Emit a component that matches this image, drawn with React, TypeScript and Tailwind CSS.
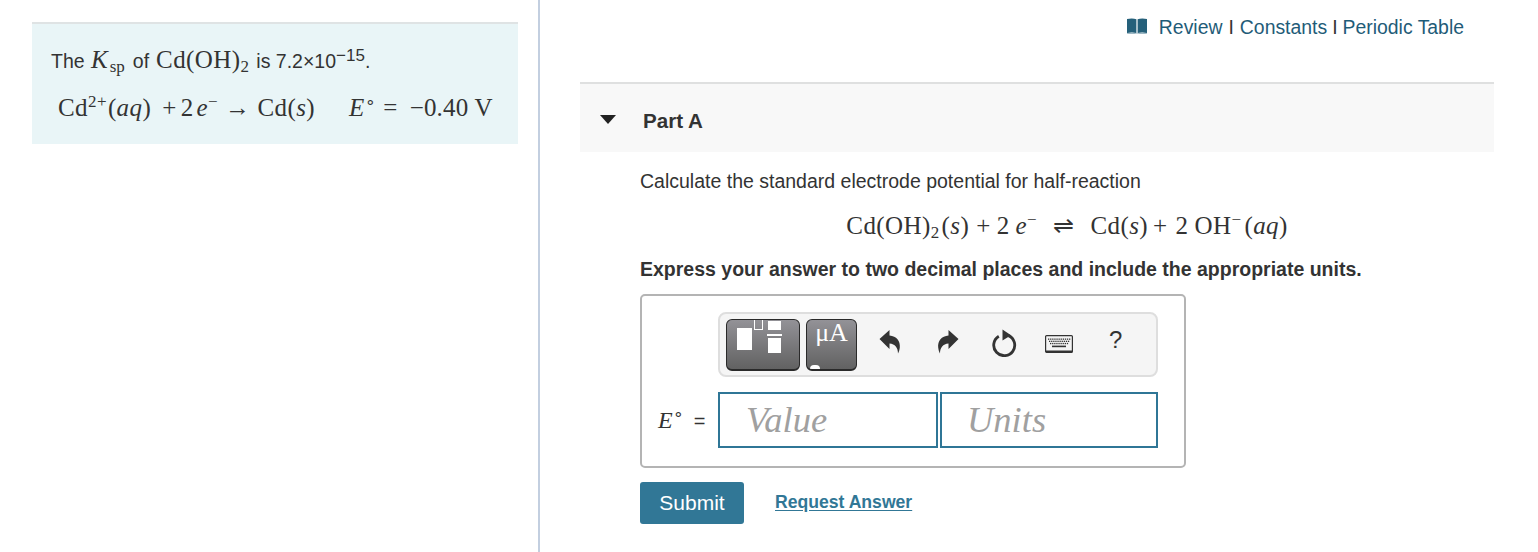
import React from "react";

const sans = "font-['Liberation_Sans',Arial,sans-serif]";
const serif = "font-['Liberation_Serif','Times_New_Roman',serif]";

function Sub({ children }: { children: React.ReactNode }) {
  return <sub className="text-[17px] leading-none align-[-4px] static">{children}</sub>;
}
function Sup({ children }: { children: React.ReactNode }) {
  return <sup className="text-[17px] leading-none align-[9px] static">{children}</sup>;
}

function BookIcon() {
  return (
    <svg width="20" height="16" viewBox="0 0 20 16" className="block">
      <path d="M0 1C3 0.2 7 0.2 9.4 1.2V15C7 14.2 3 14.2 0 15Z" fill="#25607a" />
      <path d="M10.6 1.2C13 0.2 17 0.2 20 1V15C17 14.2 13 14.2 10.6 15Z" fill="#25607a" />
      <path d="M0 15.2C3 14.4 7 14.4 10 15.6C13 14.4 17 14.4 20 15.2V16H0Z" fill="#9db8c4" />
    </svg>
  );
}

function TemplateBtn() {
  return (
    <div className="w-[74px] h-[52px] rounded-[6px] border-b-2 border-x border-t border-[#2a2a2a] bg-gradient-to-b from-[#939297] to-[#626262] flex gap-[2px] pl-[10px]">
      <div className="w-[15px] h-[22px] bg-white mt-[8px]" />
      <div className="w-[9px] h-[10px] border-x border-b border-white mt-0" />
      <div className="flex flex-col items-center w-[15px] ml-[2px] mt-[1px]">
        <div className="w-[13px] h-[9px] bg-white" />
        <div className="w-[15px] h-[2px] bg-white mt-[4px]" />
        <div className="w-[13px] h-[15px] bg-white mt-[2px]" />
      </div>
    </div>
  );
}

function UnitBtn() {
  return (
    <div className={`relative w-[51px] h-[52px] rounded-[6px] border-b-2 border-x border-t border-[#2a2a2a] bg-gradient-to-b from-[#939297] to-[#626262] text-center text-white text-[26px] leading-[26px] overflow-hidden ${serif}`}>
      μA
      <div className="absolute left-[3px] bottom-0 w-[10px] h-[4px] rounded-t-full bg-white" />
    </div>
  );
}

function Undo({ flip }: { flip?: boolean }) {
  return (
    <svg width="22" height="26" viewBox="0 0 22 26" className={flip ? "-scale-x-100" : ""}>
      <path d="M0.5 10 L10.5 1 V6.5 C17.5 7 21.5 12 20.8 18.5 C20.5 21 19.8 23 19 24.5 C19 19 16 15 10.5 14.6 V20 Z" fill="#333" />
    </svg>
  );
}

function Reset() {
  return (
    <svg width="26" height="28" viewBox="0 0 26 28">
      <path d="M7.8 7.2 A10.5 10.5 0 1 0 17.5 6.6" fill="none" stroke="#333" strokeWidth="2.8" />
      <path d="M11.5 0.5 L20 6.2 L11.5 11.5 Z" fill="#333" />
    </svg>
  );
}

function Keyboard() {
  const dots: React.ReactNode[] = [];
  [0, 1, 2].forEach((r) => {
    for (let c = 0; c < 11 - r; c++) {
      dots.push(<rect key={`${r}-${c}`} x={3 + c * 2.1 + r} y={3.5 + r * 2.2} width="1.3" height="1.3" fill="#333" />);
    }
  });
  return (
    <svg width="28" height="18" viewBox="0 0 28 18">
      <rect x="0.6" y="0.6" width="26.8" height="16.8" rx="1" fill="#f4f4f4" stroke="#333" strokeWidth="1.2" />
      {dots}
      <rect x="7" y="10.6" width="14" height="1.6" fill="#333" />
      <rect x="1" y="15.5" width="26" height="2" fill="#333" />
    </svg>
  );
}

export default function App() {
  return (
    <div className={`flex w-[1538px] h-[552px] bg-white text-[#333] overflow-hidden ${sans}`}>
      <div className="w-[540px] h-full shrink-0 border-r-2 border-[#c3cfe0] pl-[32px] pr-[20px] pt-[22px]">
        <div className="h-[122px] border-t-2 border-[#dfe3e4] bg-[#e9f5f7] pl-[19px] pt-[16px] text-[19.5px]">
          <p className="h-[40px] leading-[40px] whitespace-nowrap">
            The <span className={`${serif} italic text-[25px] ml-[1px]`}>K</span>
            <span className="ml-[2px]"><Sub><span className={serif}>sp</span></Sub></span>
            <span className="ml-[8px]">of</span>
            <span className={`${serif} text-[25px] tracking-[0.4px] ml-[7px]`}>Cd(OH)<Sub>2</Sub></span>
            <span className="ml-[7px]">is 7.2×10</span>
            <sup className="text-[17px] leading-none align-[7px] static">−15</sup>.
          </p>
          <p className={`${serif} ml-[7px] mt-[13px] text-[25px] tracking-[0.4px] leading-[30px] whitespace-nowrap`}>
            Cd<Sup>2+</Sup>
            <span className="ml-[1px]">(<i>aq</i>)</span>
            <span className="ml-[11px]">+</span>
            <span className="ml-[4px]">2</span>
            <span className="ml-[3px]"><i>e</i></span><Sup>−</Sup>
            <span className="ml-[7px]">→</span>
            <span className="ml-[7px]">Cd(<i>s</i>)</span>
            <span className="ml-[34px]"><i>E</i></span><Sup>∘</Sup>
            <span className="ml-[7px]">=</span>
            <span className="ml-[12px] tracking-[0.2px]">−0.40 V</span>
          </p>
        </div>
      </div>

      <div className="w-[914px] ml-[40px] shrink-0 flex flex-col">
        <div className="h-[82px] pt-[15px] flex justify-end items-start pr-[30px] text-[19.4px] leading-[24px] text-[#1f5c78] whitespace-nowrap">
          <span className="mt-[3px] mr-[12px]"><BookIcon /></span>
          <span>Review</span>
          <span className="text-[#333] mx-[6px]">I</span>
          <span>Constants</span>
          <span className="text-[#333] mx-[5px]">I</span>
          <span>Periodic Table</span>
        </div>

        <div className="h-[70px] border-t-2 border-[#dfe0e0] bg-[#f8f8f8] flex items-center">
          <div className="ml-[20px] w-0 h-0 border-x-[8px] border-x-transparent border-t-[9px] border-t-[#222] mt-[2px]" />
          <h2 className="ml-[27px] mt-[6px] font-bold text-[20.6px] text-[#333]">Part A</h2>
        </div>

        <div className="pl-[60px] pt-[17px] flex flex-col items-start">
          <p className="text-[19.5px] leading-[24px] whitespace-nowrap">Calculate the standard electrode potential for half-reaction</p>
          <div className={`${serif} w-[854px] text-center text-[25px] tracking-[0.4px] leading-[30px] mt-[18px] whitespace-nowrap`}>
            Cd(OH)<Sub>2</Sub>
            <span className="ml-[2px]">(<i>s</i>)</span>
            <span className="ml-[7px]">+</span>
            <span className="ml-[6px]">2</span>
            <span className="ml-[6px]"><i>e</i></span><Sup>−</Sup>
            <span className="ml-[16px] mr-[16px]">⇌</span>
            Cd(<i>s</i>)
            <span className="ml-[5px]">+</span>
            <span className="ml-[8px]">2</span>
            <span className="ml-[6px]">OH</span><Sup>−</Sup>
            <span className="ml-[3px]">(<i>aq</i>)</span>
          </div>
          <p className="font-bold text-[19.5px] leading-[24px] mt-[16px] whitespace-nowrap">Express your answer to two decimal places and include the appropriate units.</p>

          <div className="w-[546px] h-[174px] mt-[13px] border-2 border-[#b4b4b4] rounded-[5px] pt-[16px] pl-[76px]">
            <div className="w-[440px] h-[65px] border-2 border-[#dedede] rounded-[8px] bg-[#f5f5f5] flex items-center pl-[6px]">
              <TemplateBtn />
              <div className="ml-[6px]"><UnitBtn /></div>
              <div className="ml-[22px] mt-[-6px]"><Undo /></div>
              <div className="ml-[36px] mt-[-6px]"><Undo flip /></div>
              <div className="ml-[32px] mt-[-3px]"><Reset /></div>
              <div className="ml-[28px] mt-[-2px]"><Keyboard /></div>
              <div className="ml-[36px] text-[24px] text-[#333] leading-none mt-[-9px]">?</div>
            </div>
            <div className="flex mt-[15px] relative">
              <div className="absolute left-[-60px] top-[13px] flex items-center gap-[10px] whitespace-nowrap">
                <span className={`${serif} text-[24px] leading-[28px]`}><i>E</i><Sup>∘</Sup></span>
                <span className="mt-[3px] text-[20px] leading-none">=</span>
              </div>
              <div className={`w-[220px] h-[56px] border-2 border-[#2f7696] bg-white pl-[26px] text-[36.5px] leading-[52px] italic text-[#a0a0a0] ${serif}`}>Value</div>
              <div className={`w-[218px] h-[56px] ml-[2px] border-2 border-[#2f7696] bg-white pl-[25px] text-[36.5px] leading-[52px] italic text-[#a0a0a0] ${serif}`}>Units</div>
            </div>
          </div>

          <div className="flex items-center mt-[14px]">
            <button className="w-[104px] h-[42px] rounded-[3px] bg-[#317796] text-white text-[21px]">Submit</button>
            <span className="ml-[31px] mt-[-2px] font-bold text-[17.6px] text-[#317796] underline underline-offset-[2px]">Request Answer</span>
          </div>
        </div>
      </div>
    </div>
  );
}
